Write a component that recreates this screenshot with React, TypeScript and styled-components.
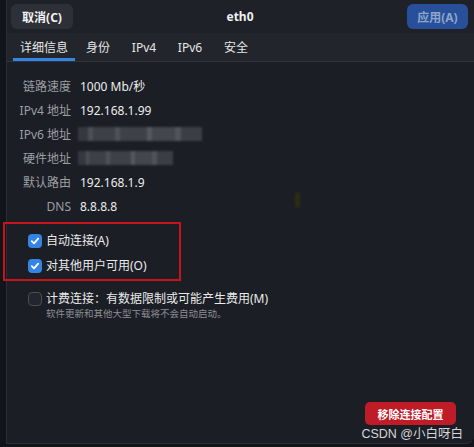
import React from 'react'
import styled, { createGlobalStyle } from 'styled-components'

const Global = createGlobalStyle`
  html, body { margin: 0; padding: 0; background: #121419; }
  body { font-family: "Noto Sans", "Noto Sans CJK SC", sans-serif; }
`

const Screen = styled.div`
  position: relative;
  width: 474px;
  height: 447px;
  overflow: hidden;
  background: #121419;
`

const Dialog = styled.div`
  position: relative;
  margin-left: 6px;
  width: 468px;
  height: 444px;
  display: flex;
  flex-direction: column;
  background: #1b1e25;
  border-left: 1px solid #2a2d34;
  border-bottom: 1px solid #2e3138;
  border-bottom-right-radius: 8px;
  box-sizing: border-box;
`

const Header = styled.div`
  height: 33px;
  display: flex;
  align-items: center;
  justify-content: space-between;
  padding: 0 6px 0 4px;
  background: #1e2128;
`

const HeadButton = styled.button<{ $primary?: boolean }>`
  height: 25px;
  width: ${p => (p.$primary ? '61px' : '62px')};
  border: none;
  border-radius: 6px;
  background: ${p => (p.$primary ? '#28509a' : '#2d3037')};
  color: ${p => (p.$primary ? '#8ea5cb' : '#f2f2f2')};
  font-family: inherit;
  font-size: 12px;
  font-weight: 700;
  padding: 0;
`

const Title = styled.div`
  color: #f0f0f0;
  font-size: 12px;
  font-weight: 700;
`

const TabBar = styled.div`
  height: 29px;
  display: flex;
  align-items: stretch;
  padding-left: 6px;
  background: #22252c;
  border-bottom: 1px solid #30333a;
  box-sizing: border-box;
`

const Tab = styled.div<{ $active?: boolean; $w: number }>`
  position: relative;
  width: ${p => p.$w}px;
  display: flex;
  align-items: center;
  justify-content: center;
  color: #e6e6e6;
  font-size: 12px;
  &::after {
    content: '';
    display: ${p => (p.$active ? 'block' : 'none')};
    position: absolute;
    left: 0;
    right: 0;
    bottom: 0;
    height: 3px;
    background: #3584e4;
  }
`

const Content = styled.div`
  flex: 1;
  display: flex;
  flex-direction: column;
  padding: 12px 0 0 4px;
`

const Details = styled.div`
  display: grid;
  grid-template-columns: 60px auto;
  column-gap: 9px;
  grid-auto-rows: 24px;
  align-items: center;
`

const Label = styled.div`
  text-align: right;
  color: #9c9ea4;
  font-size: 12px;
  white-space: nowrap;
`

const Value = styled.div`
  color: #ececec;
  font-size: 12px;
  white-space: nowrap;
`

const Blurred = styled.div<{ $w: number }>`
  width: ${p => p.$w}px;
  height: 14px;
  margin-left: -2px;
  background:
    linear-gradient(90deg,
      #3a3d44 0 8%, #55585e 8% 12%, #44474d 12% 30%, #585b61 30% 34%,
      #45484e 34% 56%, #606267 56% 60%, #4a4d53 60% 78%, #5a5d62 78% 83%, #41444a 83% 100%);
  filter: blur(0.8px);
  opacity: 0.85;
`

const Options = styled.div`
  display: flex;
  flex-direction: column;
  margin-top: 16px;
  padding-left: 17px;
`

const OptionRow = styled.div<{ $gap?: number }>`
  display: flex;
  align-items: flex-start;
  gap: 4px;
  margin-bottom: ${p => p.$gap ?? 0}px;
`

const Box = styled.div<{ $checked?: boolean }>`
  flex: none;
  width: 14px;
  height: 14px;
  border-radius: 4px;
  box-sizing: border-box;
  display: flex;
  align-items: center;
  justify-content: center;
  background: ${p => (p.$checked ? '#3584e4' : '#23262d')};
  border: ${p => (p.$checked ? 'none' : '1.5px solid #4a4d54')};
`

const OptionText = styled.div`
  display: flex;
  flex-direction: column;
`

const OptionLabel = styled.div`
  color: #eaeaea;
  font-size: 12px;
  line-height: 14px;
  white-space: nowrap;
`

const OptionHint = styled.div`
  color: #8c8e94;
  font-size: 9.5px;
  line-height: 11px;
  margin-top: 2px;
  white-space: nowrap;
`

const Footer = styled.div`
  margin-top: auto;
  display: flex;
  justify-content: flex-end;
  padding: 0 18px 18px 0;
`

const DangerButton = styled.button`
  height: 23px;
  width: 91px;
  border: none;
  border-radius: 5px;
  background: #c01c28;
  color: #ffffff;
  font-family: inherit;
  font-size: 11px;
  font-weight: 700;
  padding: 0;
`

const Annotation = styled.div`
  position: absolute;
  left: 3px;
  top: 222px;
  width: 178px;
  height: 59px;
  border: 2px solid #c8121c;
  box-sizing: border-box;
`

const Watermark = styled.div`
  position: absolute;
  right: 11px;
  top: 423px;
  color: #d4d6da;
  font-size: 12.5px;
  font-family: "Liberation Sans", "Noto Sans CJK SC", sans-serif;
`

const Speck = styled.div`
  position: absolute;
  left: 295px;
  top: 192px;
  width: 5px;
  height: 16px;
  border-radius: 3px;
  background: #2c2d12;
  filter: blur(1px);
`

const Check = () => (
  <svg width="10" height="10" viewBox="0 0 10 10">
    <path d="M1.8 5.2 L4 7.3 L8.2 2.6" fill="none" stroke="#fff" strokeWidth="1.8" strokeLinecap="round" strokeLinejoin="round" />
  </svg>
)

const tabs = [
  { name: '详细信息', w: 62, active: true },
  { name: '身份', w: 46 },
  { name: 'IPv4', w: 46 },
  { name: 'IPv6', w: 46 },
  { name: '安全', w: 46 },
]

export default function App() {
  return (
    <Screen>
      <Global />
      <Dialog>
        <Header>
          <HeadButton>取消(C)</HeadButton>
          <Title>eth0</Title>
          <HeadButton $primary>应用(A)</HeadButton>
        </Header>
        <TabBar>
          {tabs.map(t => (
            <Tab key={t.name} $w={t.w} $active={t.active}>{t.name}</Tab>
          ))}
        </TabBar>
        <Content>
          <Details>
            <Label>链路速度</Label>
            <Value>1000 Mb/秒</Value>
            <Label>IPv4 地址</Label>
            <Value>192.168.1.99</Value>
            <Label>IPv6 地址</Label>
            <Blurred $w={124} />
            <Label>硬件地址</Label>
            <Blurred $w={95} />
            <Label>默认路由</Label>
            <Value>192.168.1.9</Value>
            <Label>DNS</Label>
            <Value>8.8.8.8</Value>
          </Details>
          <Options>
            <OptionRow $gap={11}>
              <Box $checked><Check /></Box>
              <OptionText><OptionLabel>自动连接(A)</OptionLabel></OptionText>
            </OptionRow>
            <OptionRow $gap={19}>
              <Box $checked><Check /></Box>
              <OptionText><OptionLabel>对其他用户可用(O)</OptionLabel></OptionText>
            </OptionRow>
            <OptionRow>
              <Box />
              <OptionText>
                <OptionLabel>计费连接：有数据限制或可能产生费用(M)</OptionLabel>
                <OptionHint>软件更新和其他大型下载将不会自动启动。</OptionHint>
              </OptionText>
            </OptionRow>
          </Options>
          <Footer>
            <DangerButton>移除连接配置</DangerButton>
          </Footer>
        </Content>
      </Dialog>
      <Annotation />
      <Speck />
      <Watermark>CSDN @小白呀白</Watermark>
    </Screen>
  )
}
